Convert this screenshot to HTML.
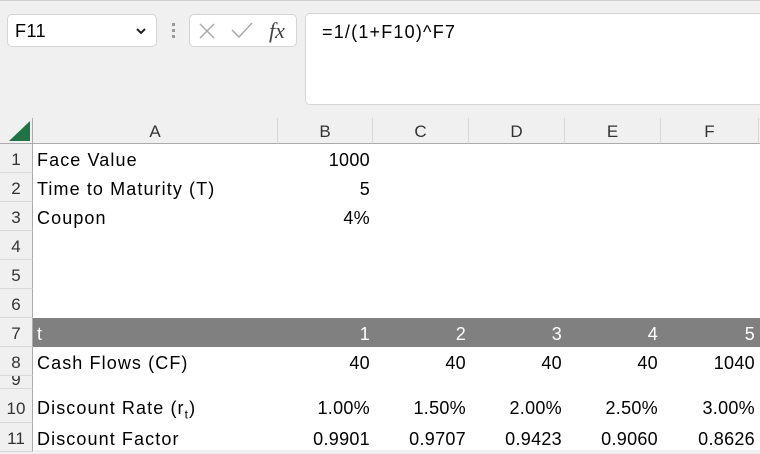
<!DOCTYPE html><html><head><style>
body{margin:0;width:760px;height:450px;overflow:hidden;background:#f0f0f0;font-family:"Liberation Sans",sans-serif;position:relative}
.a{position:absolute}
.nb{left:7px;top:14px;width:150px;height:33px;background:#fff;border:1px solid #d4d4d4;border-radius:5px;box-sizing:border-box}
.fb{left:305px;top:13px;width:470px;height:92px;background:#fff;border:1px solid #d4d4d4;border-radius:5px;box-sizing:border-box}
.ib{left:189px;top:14px;width:108px;height:33px;background:#fff;border:1px solid #d4d4d4;border-radius:5px;box-sizing:border-box}
.grid{left:0;top:118px;width:760px;height:332px;background:#fff}
.ch{position:absolute;top:118px;height:26px;background:#f0f0f0;border-bottom:1px solid #ababab;border-right:1px solid #d8d8d8;box-sizing:border-box;text-align:center;font-size:17px;line-height:27px;color:#333}
.rh{position:absolute;left:0;width:33px;background:#f0f0f0;border-right:1px solid #ababab;border-bottom:1px solid #d8d8d8;box-sizing:border-box;text-align:center;font-size:17px;color:#333}
.t{position:absolute;font-size:18px;color:#000;white-space:nowrap;letter-spacing:0.3px}
.l{letter-spacing:1.1px}
.r{text-align:right}
</style></head><body>
<div class="a" style="left:0;top:0;width:760px;height:1px;background:#d0d0d0"></div>
<div class="a nb"><span class="a" style="left:7px;top:6px;font-size:18px;letter-spacing:0.5px">F11</span>
<svg class="a" style="left:127px;top:11px" width="12" height="10"><path d="M2 3 L6 7 L10 3" stroke="#222" stroke-width="2" fill="none"/></svg></div>
<div class="a" style="left:172px;top:23px;width:3px;height:3px;background:#999;box-shadow:0 6px 0 #999,0 12px 0 #999"></div>
<div class="a ib">
<svg class="a" style="left:8px;top:7px" width="18" height="18"><path d="M2 2L16 16M16 2L2 16" stroke="#aaa" stroke-width="1.5"/></svg>
<svg class="a" style="left:40px;top:6px" width="24" height="18"><path d="M2 9L9 16L22 2" stroke="#aaa" stroke-width="1.5" fill="none"/></svg>
<span class="a" style="left:79px;top:3px;font-family:'Liberation Serif',serif;font-style:italic;font-size:22px;color:#444">fx</span></div>
<div class="a fb"><span class="a" style="left:16px;top:8px;font-size:18px;letter-spacing:1.2px">=1/(1+F10)^F7</span></div>
<div class="a grid"></div>
<div class="ch" style="left:0;width:33px;border-right:1px solid #ababab"></div>
<svg class="a" style="left:9px;top:121px" width="22" height="20"><path d="M21 0L21 20L0 20Z" fill="#217346"/></svg>
<div class="ch" style="left:33px;width:245px">A</div>
<div class="ch" style="left:278px;width:95px">B</div>
<div class="ch" style="left:373px;width:96px">C</div>
<div class="ch" style="left:469px;width:96px">D</div>
<div class="ch" style="left:565px;width:96px">E</div>
<div class="ch" style="left:661px;width:98px">F</div>
<div class="ch" style="left:759px;width:10px"></div>
<div class="a" style="left:33px;top:318px;width:727px;height:29px;background:#808080"></div>
<div class="rh" style="top:144px;height:29px;line-height:31px">1</div>
<div class="rh" style="top:173px;height:29px;line-height:31px">2</div>
<div class="rh" style="top:202px;height:29px;line-height:31px">3</div>
<div class="rh" style="top:231px;height:29px;line-height:31px">4</div>
<div class="rh" style="top:260px;height:29px;line-height:31px">5</div>
<div class="rh" style="top:289px;height:29px;line-height:31px">6</div>
<div class="rh" style="top:318px;height:29px;line-height:31px">7</div>
<div class="rh" style="top:347px;height:29px;line-height:31px">8</div>
<div class="rh" style="top:376px;height:13px;line-height:8px;overflow:hidden">9</div>
<div class="rh" style="top:389px;height:34px;line-height:40px">10</div>
<div class="rh" style="top:423px;height:29px;line-height:31px">11</div>
<div class="t l" style="left:37px;top:150px">Face Value</div>
<div class="t l" style="left:37px;top:179px">Time to Maturity (T)</div>
<div class="t l" style="left:37px;top:208px">Coupon</div>
<div class="t r" style="left:278px;width:92px;top:150px">1000</div>
<div class="t r" style="left:278px;width:92px;top:179px">5</div>
<div class="t r" style="left:278px;width:92px;top:208px">4%</div>
<div class="t" style="left:37px;top:324px;color:#fff">t</div>
<div class="t l" style="left:37px;top:353px">Cash Flows (CF)</div>
<div class="t l" style="left:37px;top:398px">Discount Rate (r<sub style="font-size:12px">t</sub>)</div>
<div class="t l" style="left:37px;top:429px">Discount Factor</div>
<div class="t r" style="left:278px;width:92px;top:324px;color:#fff">1</div>
<div class="t r" style="left:373px;width:93px;top:324px;color:#fff">2</div>
<div class="t r" style="left:469px;width:93px;top:324px;color:#fff">3</div>
<div class="t r" style="left:565px;width:93px;top:324px;color:#fff">4</div>
<div class="t r" style="left:661px;width:94px;top:324px;color:#fff">5</div>
<div class="t r" style="left:278px;width:92px;top:353px">40</div>
<div class="t r" style="left:373px;width:93px;top:353px">40</div>
<div class="t r" style="left:469px;width:93px;top:353px">40</div>
<div class="t r" style="left:565px;width:93px;top:353px">40</div>
<div class="t r" style="left:661px;width:94px;top:353px">1040</div>
<div class="t r" style="left:278px;width:92px;top:398px">1.00%</div>
<div class="t r" style="left:373px;width:93px;top:398px">1.50%</div>
<div class="t r" style="left:469px;width:93px;top:398px">2.00%</div>
<div class="t r" style="left:565px;width:93px;top:398px">2.50%</div>
<div class="t r" style="left:661px;width:94px;top:398px">3.00%</div>
<div class="t r" style="left:278px;width:92px;top:429px">0.9901</div>
<div class="t r" style="left:373px;width:93px;top:429px">0.9707</div>
<div class="t r" style="left:469px;width:93px;top:429px">0.9423</div>
<div class="t r" style="left:565px;width:93px;top:429px">0.9060</div>
<div class="t r" style="left:661px;width:94px;top:429px">0.8626</div>
</body></html>
